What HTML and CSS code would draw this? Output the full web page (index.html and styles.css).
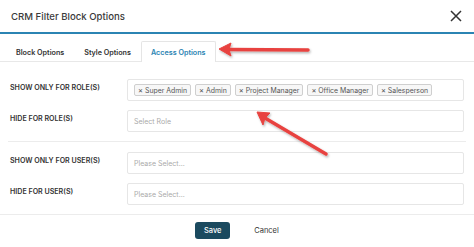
FILE: index.html
```html
<!DOCTYPE html>
<html>
<head>
<meta charset="utf-8">
<link rel="stylesheet" href="styles.css">
</head>
<body>
<div class="modal">
  <div class="header">
    <div class="title">CRM Filter Block Options</div>
    <svg class="close" width="12" height="12" viewBox="0 0 12 12"><path d="M1 1 L11 11 M11 1 L1 11" stroke="#333" stroke-width="1.5" fill="none"/></svg>
  </div>
  <div class="tabs">
    <div class="tab">Block Options</div>
    <div class="tab">Style Options</div>
    <div class="tab active">Access Options</div>
  </div>
  <div class="body">
    <div class="row">
      <div class="label">SHOW ONLY FOR ROLE(S)</div>
      <div class="field tags">
        <span class="tag"><span class="x">×</span>Super Admin</span>
        <span class="tag"><span class="x">×</span>Admin</span>
        <span class="tag"><span class="x">×</span>Project Manager</span>
        <span class="tag"><span class="x">×</span>Office Manager</span>
        <span class="tag"><span class="x">×</span>Salesperson</span>
      </div>
    </div>
    <div class="row">
      <div class="label">HIDE FOR ROLE(S)</div>
      <div class="field"><span class="ph">Select Role</span></div>
    </div>
    <div class="sep"></div>
    <div class="row">
      <div class="label">SHOW ONLY FOR USER(S)</div>
      <div class="field"><span class="ph">Please Select...</span></div>
    </div>
    <div class="row">
      <div class="label">HIDE FOR USER(S)</div>
      <div class="field"><span class="ph">Please Select...</span></div>
    </div>
  </div>
  <div class="footer">
    <button class="save">Save</button>
    <button class="cancel">Cancel</button>
  </div>
</div>
<svg class="arrows" width="474" height="247" viewBox="0 0 474 247">
  <defs>
    <filter id="sh" x="-20%" y="-20%" width="140%" height="140%">
      <feDropShadow dx="1" dy="1.5" stdDeviation="1" flood-color="#000" flood-opacity="0.3"/>
    </filter>
  </defs>
  <g filter="url(#sh)" fill="#e8433f" stroke="#e8433f">
    <line x1="308" y1="50" x2="228" y2="49.5" stroke-width="3.5" stroke-linecap="round"/>
    <polygon points="219,49 231,43 229,49.5 231,56" stroke-width="1" stroke-linejoin="round"/>
    <line x1="326" y1="154" x2="265" y2="118" stroke-width="3.5" stroke-linecap="round"/>
    <polygon points="257,112 270,113 265,118 263,125" stroke-width="1" stroke-linejoin="round"/>
  </g>
</svg>
</body>
</html>
```

FILE: styles.css
```css
* { box-sizing: border-box; }
html, body { margin: 0; padding: 0; background: #fff; }
body {
  width: 474px;
  height: 247px;
  position: relative;
  overflow: hidden;
  font-family: Inter, "Liberation Sans", sans-serif;
  color: #333;
}
.header {
  height: 34px;
  display: flex;
  align-items: center;
  justify-content: space-between;
  padding: 0 12px 0 11px;
  border-bottom: 2px solid #2b84b3;
}
.title {
  font-size: 9.6px;
  font-weight: 500;
  color: #3a3a3a;
}
.close { display: block; }
.tabs {
  display: flex;
  align-items: flex-end;
  height: 28px;
  padding-left: 6px;
  border-bottom: 1px solid #e8e8e8;
}
.tab {
  height: 21px;
  padding: 0 9px;
  margin-bottom: -1px;
  border: 1px solid transparent;
  border-bottom: none;
  font-size: 7.2px;
  font-weight: 600;
  color: #333;
  display: flex;
  align-items: center;
  border-radius: 2px 2px 0 0;
}
.tab.active {
  color: #2b84b3;
  border-color: #e5e5e5;
  background: #fff;
}
.body {
  padding: 17px 10px 0 10px;
}
.row {
  display: grid;
  grid-template-columns: 117px 1fr;
  margin-bottom: 9px;
}
.label {
  font-size: 7.1px;
  font-weight: 600;
  color: #333;
  padding-top: 4px;
}
.field {
  height: 22px;
  border: 1px solid #e6e6e6;
  border-radius: 2px;
  display: flex;
  align-items: center;
  padding: 0 6px;
}
.ph {
  font-size: 7px;
  color: #aaa;
}
.tags { gap: 4px; }
.tag {
  font-size: 6.9px;
  color: #555;
  border: 1px solid #cfcfcf;
  background: #f7f7f7;
  border-radius: 2px;
  height: 12px;
  padding: 0 3px;
  display: inline-flex;
  align-items: center;
  white-space: nowrap;
}
.tag .x { margin-right: 2px; font-size: 7.5px; }
.sep {
  height: 1px;
  background: #ececec;
  margin: 0 -2px 10px -2px;
}
.footer {
  margin-top: 4px;
  border-top: 1px solid #ececec;
  display: flex;
  justify-content: center;
  align-items: center;
  gap: 24px;
  padding-top: 7px;
}
.save {
  width: 35px;
  height: 17px;
  background: #1b4a5f;
  border: none;
  border-radius: 3px;
  color: #fff;
  font-family: inherit;
  font-size: 7.5px;
  font-weight: 500;
  padding: 0;
}
.cancel {
  background: none;
  border: none;
  color: #333;
  font-family: inherit;
  font-size: 7.5px;
  padding: 0;
}
.arrows {
  position: absolute;
  left: 0;
  top: 0;
  pointer-events: none;
}
```
